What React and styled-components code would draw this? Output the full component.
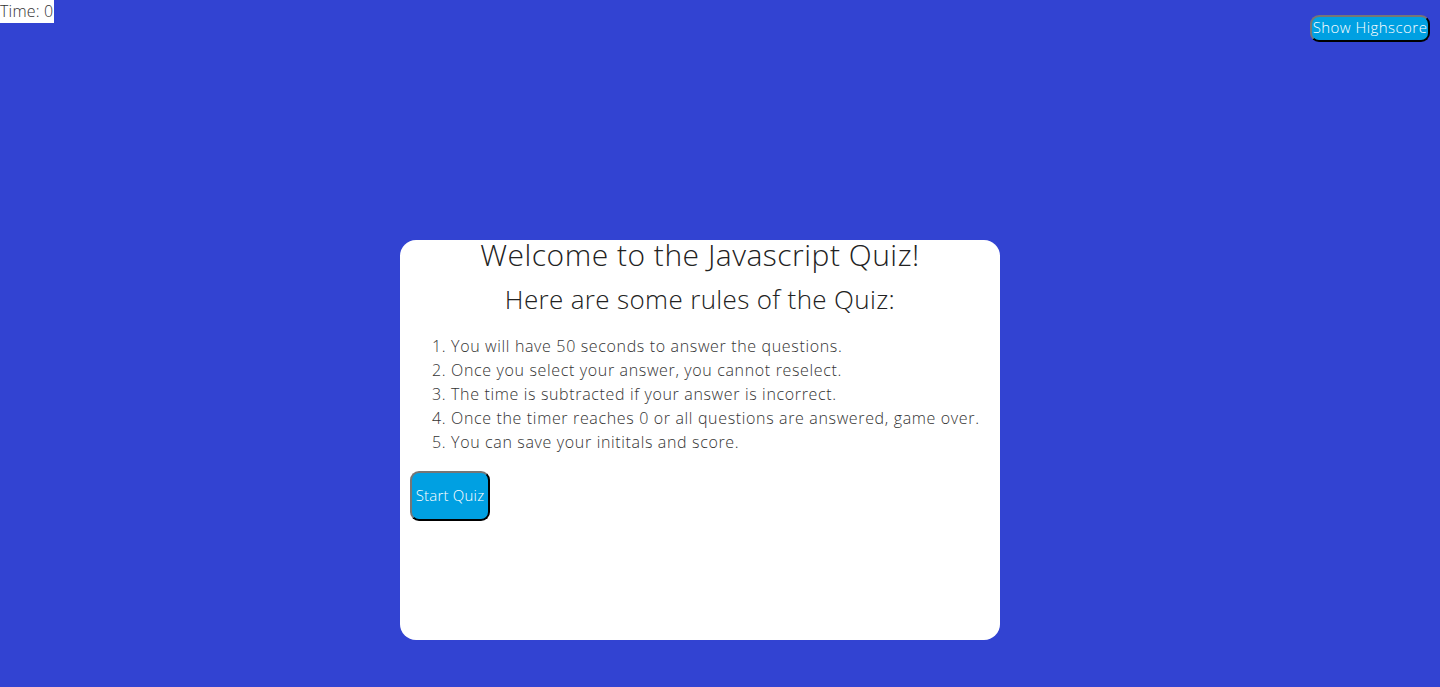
import React from "react";
import styled, { createGlobalStyle } from "styled-components";

const GlobalStyle = createGlobalStyle`
  html, body {
    margin: 0;
    padding: 0;
    background-color: #3243d2;
    font-family: "Open Sans", "Liberation Sans", sans-serif;
    font-weight: 300;
    color: #222;
  }
`;

const rules = [
  "1. You will have 50 seconds to answer the questions.",
  "2. Once you select your answer, you cannot reselect.",
  "3. The time is subtracted if your answer is incorrect.",
  "4. Once the timer reaches 0 or all questions are answered, game over.",
  "5. You can save your inititals and score.",
];

const App = () => {
  return (
    <>
      <GlobalStyle />
      <Header>
        <Timer>Time: 0</Timer>
        <HighscoreButton>Show Highscore</HighscoreButton>
      </Header>
      <Card>
        <Title>Welcome to the Javascript Quiz!</Title>
        <Subtitle>Here are some rules of the Quiz:</Subtitle>
        <Rules>
          {rules.map((rule, i) => (
            <li key={i}>{rule}</li>
          ))}
        </Rules>
        <StartButton>Start Quiz</StartButton>
      </Card>
    </>
  );
};

const Header = styled.header`
  display: flex;
  justify-content: space-between;
  align-items: flex-start;
  height: 240px;
`;

const Timer = styled.div`
  background: #fff;
  color: #333;
  font-size: 16px;
  line-height: 23px;
  padding-right: 1px;
  letter-spacing: 0.2px;
`;

const Button = styled.button`
  font-family: "Open Sans", "Liberation Sans", sans-serif;
  font-weight: 300;
  background-color: #00a0e2;
  color: #fff;
  border: 2px outset #767676;
  border-right-color: #222;
  border-bottom-color: #222;
  cursor: pointer;
  padding: 0;
  white-space: nowrap;
`;

const HighscoreButton = styled(Button)`
  margin: 15px 10px 0 0;
  width: 120px;
  height: 27px;
  padding-bottom: 3px;
  font-size: 15px;
  border-radius: 9px;
  letter-spacing: 0.45px;
`;

const Card = styled.main`
  box-sizing: border-box;
  width: 600px;
  height: 400px;
  margin: 0 0 0 400px;
  background: #fff;
  border-radius: 16px;
  padding: 0 10px;
`;

const Title = styled.h1`
  margin: 0;
  text-align: center;
  font-size: 30px;
  font-weight: 300;
  line-height: 30px;
  letter-spacing: 0.5px;
  color: #222;
`;

const Subtitle = styled.h2`
  margin: 14px 0 0;
  text-align: center;
  font-size: 26px;
  font-weight: 300;
  line-height: 30px;
  letter-spacing: 0.35px;
  color: #222;
`;

const Rules = styled.ul`
  list-style: none;
  margin: 20px 0 0;
  padding-left: 22px;
  font-size: 16px;
  line-height: 24px;
  color: #333;
  letter-spacing: 0.65px;
`;

const StartButton = styled(Button)`
  margin-top: 17px;
  width: 80px;
  height: 50px;
  padding-bottom: 2px;
  font-size: 15px;
  border-radius: 9px;
  letter-spacing: 0.2px;
`;

export default App;
